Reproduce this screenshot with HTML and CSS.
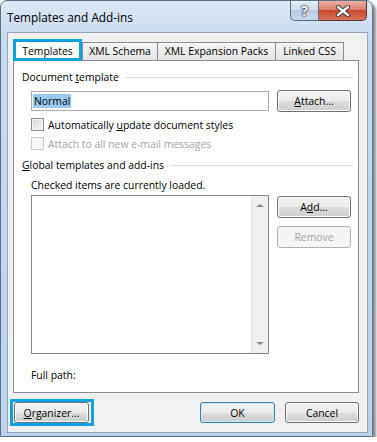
FILE: index.html
```html
<!DOCTYPE html>
<html lang="en">
<head>
    <meta charset="UTF-8">
    <title>Templates and Add-ins</title>
    <link rel="stylesheet" href="styles.css">
</head>
<body>
    <div class="window">
        <div class="titlebar">
            <span class="title">Templates and Add-ins</span>
            <div class="caption">
                <div class="cap-btn help">?</div>
                <div class="cap-btn close">
                    <svg width="16" height="12" viewBox="0 0 16 12">
                        <path d="M3 2 L13 10 M13 2 L3 10" stroke="#3c2a28" stroke-width="4.4" stroke-linecap="round"/>
                        <path d="M3 2 L13 10 M13 2 L3 10" stroke="#ffffff" stroke-width="2.6" stroke-linecap="round"/>
                    </svg>
                </div>
            </div>
        </div>

        <div class="client">
            <div class="tabs">
                <div class="tab active">Templates</div>
                <div class="tab tab-schema">XML Schema</div>
                <div class="tab tab-packs">XML Expansion Packs</div>
                <div class="tab tab-css">Linked CSS</div>
            </div>

            <div class="panel">
                <div class="group-title">
                    <span>Document <u>t</u>emplate</span>
                    <span class="groove"></span>
                </div>
                <div class="row">
                    <div class="textbox"><span class="selected">Normal</span></div>
                    <button class="btn"><u>A</u>ttach...</button>
                </div>
                <div class="check"><span class="box"></span><span>Automatically <u>u</u>pdate document styles</span></div>
                <div class="check disabled"><span class="box"></span><span>Attach to all new e-mail messages</span></div>

                <div class="group-title group-global">
                    <span><u>G</u>lobal templates and add-ins</span>
                    <span class="groove"></span>
                </div>
                <div class="note">Checked items are currently loaded.</div>
                <div class="list-row">
                    <div class="listbox">
                        <div class="scrollbar">
                            <span class="arrow up"></span>
                            <span class="arrow down"></span>
                        </div>
                    </div>
                    <div class="side-buttons">
                        <button class="btn">A<u>d</u>d...</button>
                        <button class="btn" disabled>Remove</button>
                    </div>
                </div>
                <div class="note full-path">Full path:</div>
            </div>

            <div class="footer">
                <div class="highlight">
                    <button class="btn btn-footer"><u>O</u>rganizer...</button>
                </div>
                <button class="btn btn-footer btn-ok">OK</button>
                <button class="btn btn-footer btn-cancel">Cancel</button>
            </div>
        </div>
    </div>
</body>
</html>
```

FILE: styles.css
```css
body { margin: 0; background: #ffffff; font-family: "Open Sans", "Noto Sans", sans-serif; font-size: 10.4px; color: #000; }

.window {
    width: 373px;
    height: 437px;
    box-sizing: border-box;
    border: 1px solid #5d6f86;
    border-radius: 7px 7px 0 0;
    padding: 0 4px 3px 6px;
    background: linear-gradient(to bottom, #dde8f5 0, #c6d9ef 40px, #bad2ec 100%);
    box-shadow: 3px 3px 3px rgba(0, 0, 0, 0.45);
    display: flex;
    flex-direction: column;
}

.titlebar { height: 31px; display: flex; align-items: flex-start; flex-shrink: 0; }
.title { margin-top: 7px; line-height: 18px; font-size: 11.8px; }
.caption { display: flex; margin-left: auto; margin-right: 1px; }
.cap-btn { height: 20px; box-sizing: border-box; display: flex; align-items: center; justify-content: center; }
.help {
    width: 29px;
    border: 1px solid #5c6d84;
    border-top: none;
    border-radius: 0 0 0 5px;
    background: linear-gradient(to bottom, #e6eef7 0, #cfdcec 45%, #b7c9df 50%, #c8d8ec 100%);
    color: #fff;
    font-weight: bold;
    font-size: 14px;
    text-shadow: 0 0 1px #2a3646, 0 0 2px #2a3646, 0 0 2px #2a3646;
}
.close {
    width: 48px;
    border: 1px solid #5a3630;
    border-top: none;
    border-left: none;
    border-radius: 0 0 5px 0;
    background: linear-gradient(to bottom, #eab0a3 0, #d98070 45%, #c8482f 50%, #d8745d 100%);
}

.client {
    flex: 1;
    border: 1px solid #94a4b8;
    background: #f0f0f0;
    padding: 6px 8px 0 5px;
    display: flex;
    flex-direction: column;
}

.tabs { display: flex; align-items: flex-end; height: 21px; position: relative; z-index: 1; }
.tab {
    height: 18px;
    box-sizing: border-box;
    border: 1px solid #898c95;
    border-bottom: none;
    margin-left: -1px;
    background: linear-gradient(to bottom, #f5f5f5, #e4e4e4);
    text-align: center;
    line-height: 17px;
    white-space: nowrap;
}
.tab.active {
    width: 69px;
    height: 22px;
    margin: 0 0 -1px 0;
    border: 3px solid #0ea2e2;
    background: #ffffff;
    line-height: 19px;
}
.tab-schema { width: 76px; margin-left: 0; }
.tab-packs { width: 119px; }
.tab-css { width: 69px; }

.panel {
    height: 333px;
    box-sizing: border-box;
    border: 1px solid #898c95;
    background: #ffffff;
    padding: 9px 5px 0 0;
}

.group-title { display: flex; align-items: center; padding-left: 8px; height: 15px; line-height: 15px; }
.groove { flex: 1; margin-left: 6px; border-top: 1px solid #d5dfe5; border-bottom: 1px solid #ffffff; }
.group-global { margin-top: 5px; }

.row { display: flex; align-items: center; gap: 8px; padding-left: 17px; margin-top: 5px; height: 22px; }
.textbox {
    width: 238px;
    height: 20px;
    box-sizing: border-box;
    border: 1px solid #a9abb2;
    padding: 1px 1px;
    line-height: 16px;
}
.selected { background: #99c9ef; padding: 0 1px; }

.btn {
    width: 74px;
    height: 22px;
    padding: 0;
    font-family: inherit;
    font-size: 10.4px;
    color: #000;
    border: 1px solid #707070;
    border-radius: 3px;
    background: linear-gradient(to bottom, #f2f2f2 0, #ebebeb 50%, #dddddd 50%, #cfcfcf 100%);
    box-shadow: inset 0 0 0 1px #fbfbfb;
}
.btn:disabled {
    color: #a3a3a3;
    border-color: #adb2b5;
    background: #f4f4f4;
    box-shadow: none;
}

.check { display: flex; align-items: center; gap: 4px; height: 19px; padding-left: 17px; }
.row + .check { margin-top: 3px; }
.box {
    width: 13px;
    height: 13px;
    box-sizing: border-box;
    border: 1px solid #8e8f8f;
    background: linear-gradient(135deg, #d4d4d4, #f8f8f8);
    box-shadow: inset 0 0 0 1px #f4f4f4;
}
.check.disabled { color: #a3a3a3; }
.check.disabled .box { border-color: #c8c8c8; background: #f6f6f6; box-shadow: none; }

.note { padding-left: 17px; margin-top: 5px; line-height: 15px; }
.full-path { margin-top: 14px; }

.list-row { display: flex; align-items: flex-start; gap: 8px; padding-left: 17px; margin-top: 2px; }
.listbox {
    width: 238px;
    height: 159px;
    box-sizing: border-box;
    border: 1px solid #828790;
    display: flex;
    justify-content: flex-end;
}
.scrollbar {
    width: 17px;
    box-sizing: border-box;
    border-left: 1px solid #e6e6e6;
    background: #efefef;
    display: flex;
    flex-direction: column;
    justify-content: space-between;
    align-items: center;
    padding: 8px 0 8px;
}
.arrow { width: 0; height: 0; border-left: 4px solid transparent; border-right: 4px solid transparent; }
.arrow.up { border-bottom: 3px solid #8a8a8a; }
.arrow.down { border-top: 3px solid #8a8a8a; }
.side-buttons { display: flex; flex-direction: column; gap: 8px; margin-top: 1px; }

.footer { display: flex; align-items: center; margin-top: 6px; }
.highlight { border: 3px solid #0ea2e2; margin-left: -3px; padding: 0 2px 0 1px; display: flex; }
.btn-footer { width: 75px; height: 21px; }
.btn-ok { margin-left: auto; border-color: #3c7fb1; box-shadow: inset 0 0 0 1px #c8e8f8; }
.btn-cancel { margin-left: 10px; width: 74px; }
```
